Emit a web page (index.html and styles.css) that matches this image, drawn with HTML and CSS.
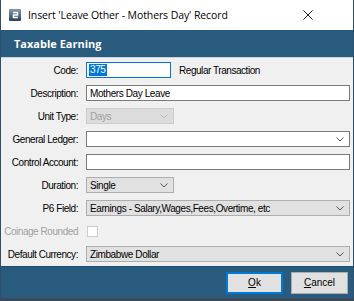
FILE: index.html
```html
<!DOCTYPE html>
<html>
<head>
<meta charset="utf-8">
<link rel="stylesheet" href="styles.css">
</head>
<body>
<div class="window">
  <div class="titlebar">
    <svg class="appicon" width="12" height="12" viewBox="0 0 12 12">
      <defs><linearGradient id="g" x1="0" y1="0" x2="0" y2="1"><stop offset="0" stop-color="#7f9bb4"/><stop offset="1" stop-color="#2c3e55"/></linearGradient></defs>
      <rect x="0" y="0" width="12" height="12" rx="1" fill="url(#g)"/>
      <path d="M4 3.5 H8.5 V6 H4.5 V8.5 H9" fill="none" stroke="#fff" stroke-width="1.6"/>
    </svg>
    <span class="title">Insert 'Leave Other - Mothers Day' Record</span>
    <svg class="close" width="10" height="10" viewBox="0 0 10 10"><path d="M0.5 0.5 L9.5 9.5 M9.5 0.5 L0.5 9.5" stroke="#222" stroke-width="1"/></svg>
  </div>
  <div class="header">Taxable Earning</div>
  <div class="form">
    <div class="row">
      <label class="lbl">Code:</label>
      <div class="field short focused"><span class="sel">375</span></div>
      <span class="note">Regular Transaction</span>
    </div>
    <div class="row">
      <label class="lbl">Description:</label>
      <div class="field wide">Mothers Day Leave</div>
    </div>
    <div class="row">
      <label class="lbl">Unit Type:</label>
      <div class="combo short disabled"><span>Days</span><svg class="chev" width="8" height="5" viewBox="0 0 8 5"><path d="M0.5 0.5 L4 4 L7.5 0.5" fill="none" stroke="#bcbcbc" stroke-width="1"/></svg></div>
    </div>
    <div class="row">
      <label class="lbl">General Ledger:</label>
      <div class="field wide editcombo"><span></span><svg class="chev" width="8" height="5" viewBox="0 0 8 5"><path d="M0.5 0.5 L4 4 L7.5 0.5" fill="none" stroke="#555" stroke-width="1"/></svg></div>
    </div>
    <div class="row">
      <label class="lbl">Control Account:</label>
      <div class="field wide"></div>
    </div>
    <div class="row">
      <label class="lbl">Duration:</label>
      <div class="combo short"><span>Single</span><svg class="chev" width="8" height="5" viewBox="0 0 8 5"><path d="M0.5 0.5 L4 4 L7.5 0.5" fill="none" stroke="#555" stroke-width="1"/></svg></div>
    </div>
    <div class="row">
      <label class="lbl">P6 Field:</label>
      <div class="combo wide"><span>Earnings - Salary,Wages,Fees,Overtime, etc</span><svg class="chev" width="8" height="5" viewBox="0 0 8 5"><path d="M0.5 0.5 L4 4 L7.5 0.5" fill="none" stroke="#555" stroke-width="1"/></svg></div>
    </div>
    <div class="row">
      <label class="lbl dim">Coinage Rounded</label>
      <div class="check"></div>
    </div>
    <div class="row">
      <label class="lbl">Default Currency:</label>
      <div class="combo wide"><span>Zimbabwe Dollar</span><svg class="chev" width="8" height="5" viewBox="0 0 8 5"><path d="M0.5 0.5 L4 4 L7.5 0.5" fill="none" stroke="#555" stroke-width="1"/></svg></div>
    </div>
  </div>
  <div class="footer">
    <button class="btn default"><u>O</u>k</button>
    <button class="btn"><u>C</u>ancel</button>
  </div>
</div>
</body>
</html>
```
FILE: styles.css
```css
html, body {
  margin: 0;
  padding: 0;
  background: #3a4a58;
  width: 354px;
  height: 301px;
  overflow: hidden;
}
.window {
  width: 352px;
  border-left: 1px solid #2b4f6d;
  border-right: 1px solid #2b4f6d;
  background: #f0f0f0;
  font-family: "Liberation Sans", Arial, sans-serif;
  font-size: 10px;
  color: #000;
}
.titlebar {
  height: 30px;
  background: #fff;
  display: flex;
  align-items: center;
  padding-left: 8px;
  padding-right: 40px;
  position: relative;
}
.appicon { margin-right: 7px; flex: none; }
.title {
  font-family: "Open Sans", "Noto Sans", sans-serif;
  font-size: 10.5px;
  color: #000;
  letter-spacing: -0.1px;
  white-space: nowrap;
}
.close {
  position: absolute;
  right: 40px;
  top: 10px;
}
.header {
  height: 27px;
  background: #295b7f;
  color: #fff;
  font-family: "Open Sans", "Noto Sans", sans-serif;
  font-weight: bold;
  font-size: 11px;
  display: flex;
  align-items: center;
  padding-left: 13px;
  border-bottom: 1px solid #c8d4de;
}
.form {
  display: flex;
  flex-direction: column;
  gap: 7px;
  padding: 4px 0 3px 0;
  height: 201px;
}
.row {
  display: flex;
  align-items: center;
  height: 16px;
}
.lbl {
  width: 77px;
  text-align: right;
  margin-right: 8px;
  white-space: nowrap;
  letter-spacing: -0.45px;
}
.lbl.dim { color: #a0a0a0; }
.field, .combo {
  box-sizing: border-box;
  height: 16px;
  border: 1px solid #7a7a7a;
  background: #fff;
  display: flex;
  align-items: center;
  padding-left: 3px;
  white-space: nowrap;
  overflow: hidden;
  letter-spacing: -0.4px;
}
.short { width: 88px; }
.wide { width: 264px; }
.field.short { width: 85px; }
.focused { border-color: #0078d7; padding-left: 2px; }
.sel { background: #0078d7; color: #fff; padding: 0 1px; line-height: 12px; }
.note { margin-left: 8px; letter-spacing: -0.45px; }
.combo {
  background: #e1e1e1;
  border-color: #adadad;
  justify-content: space-between;
  padding-right: 5px;
}
.editcombo { justify-content: space-between; padding-right: 5px; }
.combo.disabled { background: #dcdcdc; border-color: #cccccc; color: #a0a0a0; }
.chev { flex: none; }
.check {
  box-sizing: border-box;
  width: 11px;
  height: 11px;
  border: 1px solid #cccccc;
  background: #fff;
  margin-left: 1px;
}
.footer {
  height: 31px;
  background: #295b7f;
  display: flex;
  justify-content: flex-end;
  align-items: center;
  gap: 8px;
  padding-right: 5px;
  border-top: 1px solid #1f4a6a;
}
.btn {
  box-sizing: border-box;
  width: 57px;
  height: 22px;
  background: #e1e1e1;
  border: 1px solid #adadad;
  font-family: "Liberation Sans", Arial, sans-serif;
  font-size: 10px;
  color: #000;
  padding: 0;
  margin: 0;
}
.btn.default { border: 2px solid #0078d7; }
```
